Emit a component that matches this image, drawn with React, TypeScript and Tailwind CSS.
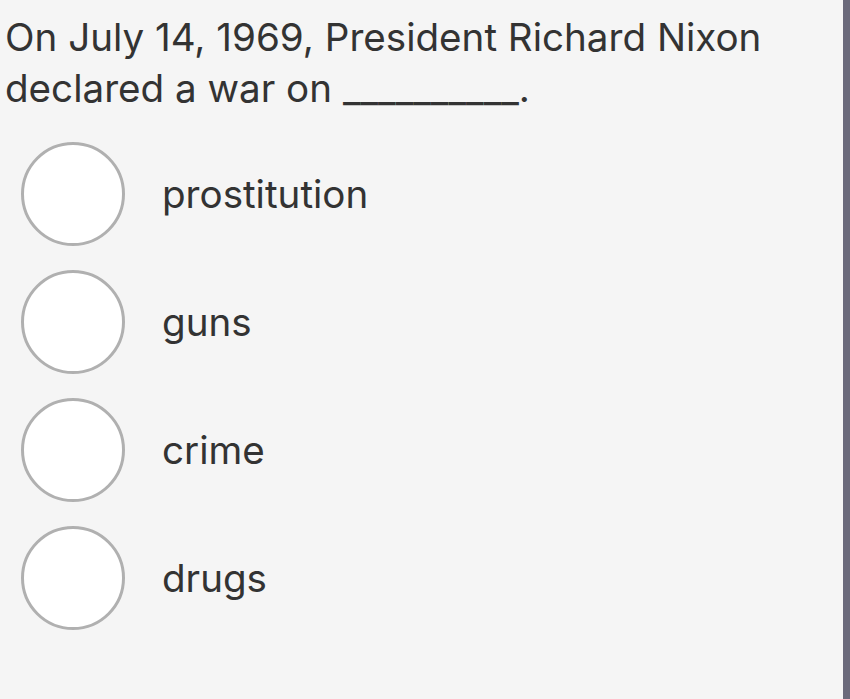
const options = ["prostitution", "guns", "crime", "drugs"];

export default function App() {
  return (
    <div
      className="flex h-[699px] w-[850px] bg-[#f5f5f5] text-[#333333]"
      style={{ fontFamily: "Inter, 'Noto Sans', sans-serif" }}
    >
      <div className="flex-1 pl-[5px] pt-[12px]">
        <p className="text-[38.6px] leading-[51px]">
          On July 14, 1969, President Richard Nixon declared a war on __________.
        </p>
        <div className="mt-[28px] flex flex-col gap-[24px] pl-[16px]">
          {options.map((opt) => (
            <label key={opt} className="flex items-center gap-[37px]">
              <span className="h-[104px] w-[104px] shrink-0 rounded-full border-[3px] border-[#b0b0b0] bg-white" />
              <span className="text-[38.6px] leading-none">{opt}</span>
            </label>
          ))}
        </div>
      </div>
      <div className="w-[7px] bg-[#6b6a7b]" />
    </div>
  );
}
